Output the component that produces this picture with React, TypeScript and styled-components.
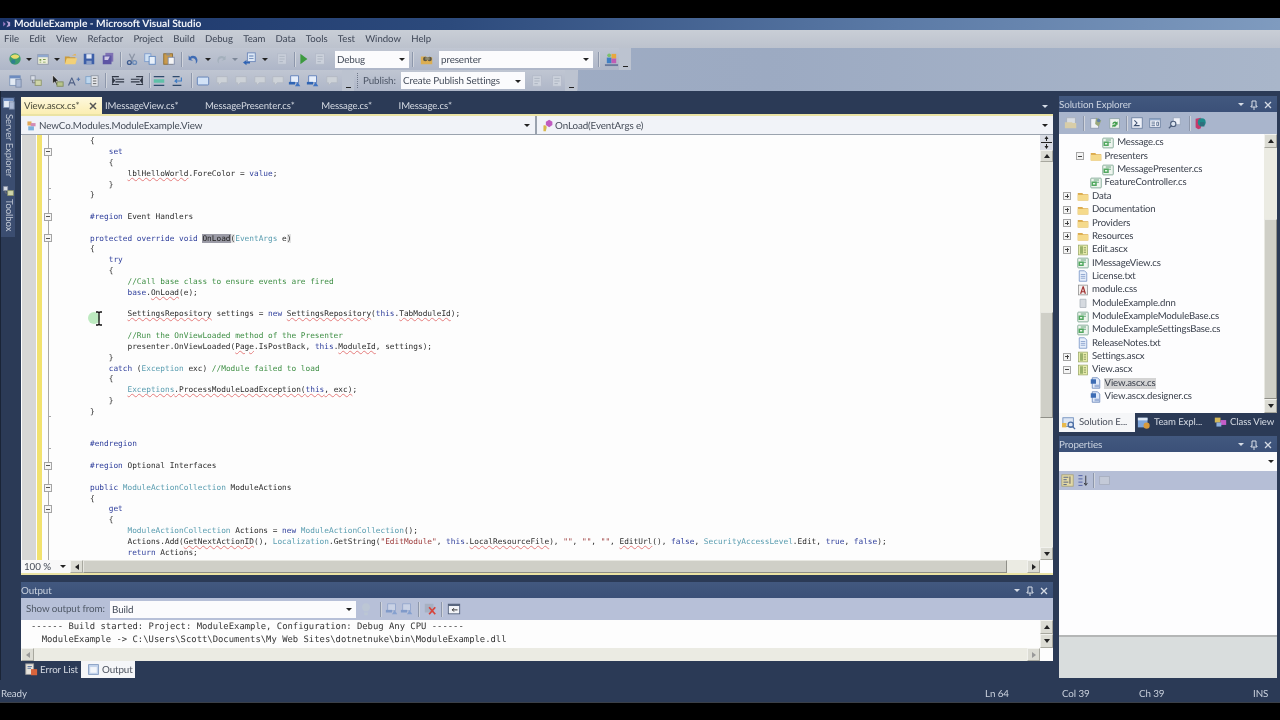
import React from "react";
import styled, { createGlobalStyle } from "styled-components";

const Global = createGlobalStyle`
  html, body { margin: 0; padding: 0; background: #000; }
  * { box-sizing: border-box; }
`;

const UI = `Lato, "Open Sans", "Noto Sans", "Liberation Sans", sans-serif`;
const MONO = `"DejaVu Sans Mono", "Liberation Mono", monospace`;
const NAVY = "#2b3a56";
const LINE = 10.84;

const Page = styled.div`
  width: 1280px; height: 720px; background: #000; overflow: hidden;
  display: flex; flex-direction: column; padding: 18px 0 17px; letter-spacing: -0.1px;
  font-family: ${UI}; text-rendering: geometricPrecision; filter: blur(0.45px);
`;
const TitleBar = styled.div`
  height: 12px; display: flex; align-items: center; gap: 2px; padding-left: 2px;
  background: linear-gradient(90deg, #1b3468 0%, #2c4a7c 35%, #5b7aa6 70%, #7f9bbf 100%);
  color: #eef1f6; font-size: 10.2px; font-weight: 700; letter-spacing: 0;
`;
const MenuBar = styled.div`
  height: 18px; display: flex; align-items: center; gap: 10.2px; padding: 1px 0 0 4px;
  background: linear-gradient(180deg, #c9ced6, #bcc2cd); color: #3e4656; font-size: 9.6px; letter-spacing: 0;
`;
const ToolRow = styled.div<{ $h: number }>`
  height: ${p => p.$h}px; background: linear-gradient(90deg, #a3b0c6, #9caac2 60%, #a9b6ca);
  display: flex; flex-shrink: 0;
`;
const Toolbar = styled.div<{ $w: number }>`
  width: ${p => p.$w}px; display: flex; align-items: center; padding-left: 6px;
  background: linear-gradient(180deg, #c0c6d2, #aeb6c8);
  border-bottom-right-radius: 2px;
`;
const Slot = styled.div<{ $w: number }>`
  width: ${p => p.$w}px; height: 100%; flex-shrink: 0;
  display: flex; align-items: center; justify-content: center;
`;
const Caret = styled.i<{ $c?: string }>`
  display: block; width: 0; height: 0;
  border-left: 3px solid transparent; border-right: 3px solid transparent;
  border-top: 3px solid ${p => p.$c || "#222"};
`;
const Sep = styled.div`width: 1px; height: 15px; background: #8d97ab; box-shadow: 1px 0 #d0d4dc;`;
const Dots = styled.div`width: 0; height: 15px; border-left: 1px dotted #6d7688;`;
const Grip = styled.div`
  width: 12px; height: 100%; display: flex; flex-direction: column; align-items: center;
  justify-content: flex-end; gap: 1px; padding-bottom: 3px; background: #bcc3d0;
  &::before { content: ""; width: 5px; height: 1px; background: #222; }
`;
const Combo = styled.div<{ $w: number; $ml?: number }>`
  width: ${p => p.$w}px; height: 17px; margin-left: ${p => p.$ml || 0}px; flex-shrink: 0;
  background: #fbfbfd; display: flex; align-items: center; justify-content: space-between;
  padding: 1px 4px 0 2px; color: #444c5a; font-size: 9.8px; white-space: nowrap;
`;
const Publish = styled.span`margin-left: 3px; width: 38px; color: #4c5566; font-size: 9.8px; padding-top: 1px;`;

const Main = styled.div`height: 589px; display: flex; background: ${NAVY};`;
const Rail = styled.div`
  width: 21px; flex-shrink: 0; padding-top: 6px;
  background: ${NAVY}; border-left: 1px solid #1a2436;
`;
const RailTabs = styled.div`width: 14px; height: 140px; background: #3b4d70; display: flex; flex-direction: column; align-items: center;`;
const RailLabel = styled.span<{ $h: number; $mt: number }>`
  writing-mode: vertical-rl; height: ${p => p.$h}px; margin-top: ${p => p.$mt}px; color: #c0c7d4; font-size: 9.6px; line-height: 14px;
`;
const Center = styled.div`width: 1032px; flex-shrink: 0; display: flex; flex-direction: column;`;
const DocTabs = styled.div`height: 23px; display: flex; align-items: flex-end; position: relative; color: #d4d9e2; font-size: 9.6px;`;
const ActiveTab = styled.div`
  width: 81px; height: 17px; background: linear-gradient(180deg, #fdf8de, #fbeeb2);
  color: #4c4c3c; display: flex; align-items: center; justify-content: space-between; padding: 1px 5px 0 3px;
`;
const TabList = styled.div`height: 17px; display: flex; gap: 26.5px; padding: 1px 0 0 3px; align-items: center;`;
const TabMenu = styled.div`position: absolute; right: 5px; top: 14px;`;
const Gold = styled.div`height: 2px; background: #ebe3a4; flex-shrink: 0;`;
const NavBar = styled.div`
  height: 19px; background: #f1f3f8; display: flex; color: #454c58; font-size: 9.8px;
  border-bottom: 1px solid #9ba3ae; flex-shrink: 0;
`;
const NavCell = styled.div<{ $w: number; $pl: number }>`
  width: ${p => p.$w}px; display: flex; align-items: center; padding: 1px 5px 0 ${p => p.$pl}px; gap: 1px;
  & > span { flex: 1; }
  border-right: 2px solid #9aa2ae;
  &:last-child { border-right: none; }
`;
const EditorWrap = styled.div`height: 425px; display: flex; background: #fdfdfd; overflow: hidden;`;
const GutterGrey = styled.div`width: 14px; margin-left: 1px; margin-right: 1px; background: #d7d7d5; flex-shrink: 0;`;
const Changed = styled.div`width: 5px; background: #f2e26e; flex-shrink: 0;`;
const FoldCol = styled.div`width: 48px; flex-shrink: 0; padding-left: 6px;`;
const FoldRail = styled.div`width: 1px; height: 100%; background: #a8a8a8;`;
const FoldMark = styled.div`height: ${LINE}px; position: relative;`;
const FoldBox = styled.div`
  position: absolute; left: -4px; top: 2px; width: 8px; height: 8px; background: #f6f6f6;
  border: 1px solid #a4a4a4; display: flex; align-items: center; justify-content: center;
  &::before { content: ""; width: 4px; height: 1px; background: #555; }
`;
const FoldTick = styled.div`position: absolute; left: 0; bottom: 0; width: 3px; height: 1px; background: #a8a8a8;`;
const Code = styled.div`
  flex: 1; min-width: 0; font-family: ${MONO}; font-size: 7.79px; color: #2c2c2c; position: relative; padding-top: 1.2px; letter-spacing: 0;
`;
const CodeLine = styled.div`height: ${LINE}px; line-height: ${LINE}px; white-space: pre;`;
const K = styled.span`color: #2f3f9c;`;
const T = styled.span`color: #5a9db0;`;
const Cm = styled.span`color: #3f8f45;`;
const S = styled.span`color: #9c3a3a;`;
const E = styled.span`text-decoration: underline wavy #e57d7d 1px; text-underline-offset: 1px;`;
const Hit = styled.span`background: #9b9ba6; color: #222;`;
const Soft = styled.span`background: #e4e4e4;`;
const CursorMark = styled.div`
  position: absolute; left: -2px; top: 177px; width: 12px; height: 12px; border-radius: 50%; background: #bdeac0;
`;
const CursorBeam = styled.svg`position: absolute; left: 5px; top: 176px;`;

const VBar = styled.div`width: 13px; flex-shrink: 0; display: flex; flex-direction: column; background: #ebebe3;`;
const SplitBtn = styled.div`height: 15px; background: #d9dce4; display: flex; align-items: center; justify-content: center;`;
const Arrow = styled.div<{ $h?: number }>`
  height: ${p => p.$h || 13}px; flex-shrink: 0; background: #dcdcd4; display: flex; align-items: center; justify-content: center;
  border: 1px solid; border-color: #f2f2ee #a8a89f #a8a89f #f2f2ee;
`;
const Tri = styled.i<{ $d: "u" | "d" | "l" | "r"; $c?: string }>`
  display: block; width: 0; height: 0;
  ${p => {
    const c = p.$c || "#222";
    if (p.$d === "u") return `border-left:3.5px solid transparent;border-right:3.5px solid transparent;border-bottom:4px solid ${c};`;
    if (p.$d === "d") return `border-left:3.5px solid transparent;border-right:3.5px solid transparent;border-top:4px solid ${c};`;
    if (p.$d === "l") return `border-top:3.5px solid transparent;border-bottom:3.5px solid transparent;border-right:4px solid ${c};`;
    return `border-top:3.5px solid transparent;border-bottom:3.5px solid transparent;border-left:4px solid ${c};`;
  }}
`;
const VTrack = styled.div<{ $h: number }>`height: ${p => p.$h}px; flex-shrink: 0;`;
const VThumb = styled.div<{ $h: number }>`
  height: ${p => p.$h}px; flex-shrink: 0; background: #cfcfc7; border: 1px solid; border-color: #e8e8e2 #8f8f88 #8f8f88 #e8e8e2;
`;
const HBar = styled.div`height: 13px; display: flex; flex-shrink: 0; background: #ebebe3;`;
const Zoom = styled.div`
  width: 49px; background: #f8f8f8; display: flex; align-items: center; justify-content: space-between;
  padding: 0 4px 0 3px; color: #454c58; font-size: 9.8px;
`;
const HBtn = styled.div`
  width: 13px; flex-shrink: 0; background: #dcdcd4; display: flex; align-items: center; justify-content: center;
  border: 1px solid; border-color: #f2f2ee #a8a89f #a8a89f #f2f2ee;
`;
const HThumb = styled.div<{ $w: number }>`
  width: ${p => p.$w}px; flex-shrink: 0; background: #cfcfc7; border: 1px solid; border-color: #e8e8e2 #8f8f88 #8f8f88 #e8e8e2;
`;
const Corner = styled.div`width: 13px; flex-shrink: 0; background: #fdfdfd;`;
const Spacer = styled.div`flex: 1;`;

const PanelTitle = styled.div<{ $mt?: number }>`
  height: 16px; flex-shrink: 0; margin-top: ${p => p.$mt || 0}px;
  background: linear-gradient(180deg, #42587f, #3b5078); color: #cbd3e0; font-size: 9.8px;
  display: flex; align-items: center; padding: 1px 5px 0 0;
  & > span:first-child { flex: 1; }
`;
const PanelBtns = styled.div`display: flex; align-items: center; gap: 6px; color: #d6dce6;`;
const OutBar = styled.div`
  height: 22px; background: #b7c0d8; display: flex; align-items: center; flex-shrink: 0;
`;
const OutLabel = styled.span`margin-left: 5px; width: 84px; color: #4f5866; font-size: 9.8px; white-space: nowrap;`;
const OutBody = styled.div`height: 28px; display: flex; background: #fdfdfd;`;
const OutText = styled.div`
  flex: 1; font-family: ${MONO}; font-size: 8.9px; line-height: 13px; color: #333; white-space: pre; padding: 1px 0 0 10px; letter-spacing: 0;
`;
const OutTabs = styled.div`height: 17px; display: flex; align-items: stretch; color: #d4d9e2; font-size: 9.8px;`;
const OutTab = styled.div<{ $active?: boolean; $w: number; $pl: number }>`
  width: ${p => p.$w}px; padding-left: ${p => p.$pl}px; display: flex; align-items: center; gap: 2px;
  ${p => p.$active && "background:#f5f6f8;color:#4a505c;"}
`;

const Dock = styled.div`width: 218px; margin-left: 6px; flex-shrink: 0; display: flex; flex-direction: column; padding-top: 5px;`;
const DockBar = styled.div<{ $h: number; $bg: string }>`
  height: ${p => p.$h}px; background: ${p => p.$bg}; flex-shrink: 0; display: flex; align-items: center;
`;
const TreeWrap = styled.div`height: 279px; display: flex; background: #fdfdfe; flex-shrink: 0; overflow: hidden;`;
const Tree = styled.div`flex: 1; padding-top: 2.2px; color: #3c424e; font-size: 9.6px; letter-spacing: -0.15px;`;
const Row = styled.div<{ $d: number }>`
  height: 13.36px; display: flex; align-items: center; padding-left: ${p => (p.$d - 1) * 12.6 + 18}px; position: relative; white-space: nowrap;
`;
const Expander = styled.div<{ $plus: boolean }>`
  position: absolute; margin-left: -14px; width: 8px; height: 8px; border: 1px solid #a6a6a6; background: #f4f4f4;
  display: flex; align-items: center; justify-content: center;
  &::before { content: ""; position: absolute; width: 4px; height: 1px; background: #444; }
  ${p => p.$plus && `&::after { content: ""; position: absolute; width: 1px; height: 4px; background: #444; }`}
`;
const RowText = styled.span<{ $sel?: boolean }>`
  margin-left: 2px; padding: 0 1px; ${p => p.$sel && "background:#d4d4d4;"}
`;
const SideTabs = styled.div`height: 19px; display: flex; align-items: stretch; flex-shrink: 0; color: #d4d9e2; font-size: 9.6px;`;
const SideTab = styled.div<{ $active?: boolean; $w: number; $pl: number }>`
  width: ${p => p.$w}px; padding-left: ${p => p.$pl}px; display: flex; align-items: center; gap: 3px; white-space: nowrap;
  ${p => p.$active && "background:#f5f6f8;color:#4a505c;"}
`;
const PropCombo = styled.div`height: 19px; background: #fbfbfc; display: flex; align-items: center; justify-content: flex-end; padding-right: 3px; flex-shrink: 0;`;
const PropBody = styled.div`height: 147px; background: #fdfdfe; border-bottom: 2px solid #b4b6b6; flex-shrink: 0;`;
const PropDesc = styled.div`height: 41px; background: #d9dddd; flex-shrink: 0;`;

const Status = styled.div`
  height: 23px; background: ${NAVY}; color: #c9d0dc; font-size: 9.8px;
  display: flex; align-items: center; padding-top: 5px; padding-left: 1px;
  border-bottom: 1px solid #3a3f48;
`;
const StatusItem = styled.span<{ $w: number }>`width: ${p => p.$w}px; flex-shrink: 0;`;

const I = {
  vs: <><path d="M2 4l4 4-4 4z" fill="#9a7cc4"/><path d="M7 3l6 2v6l-6 2 3-5z" fill="#b9a5d8"/></>,
  globe: <><circle cx="8" cy="8" r="6.5" fill="#3f9c6e"/><path d="M3 5c3-3 8-3 10 0-2 3-7 4-10 0z" fill="#e8dc6c"/><circle cx="6" cy="11" r="2.5" fill="#2e7f8f"/></>,
  add: <><rect x="2" y="3" width="12" height="11" fill="#eef0da" stroke="#8d94a6"/><rect x="2" y="3" width="12" height="3" fill="#8fa7cf"/><path d="M4 8h2v2H4zM8 8h3v1H8zM4 11h2v1H4zM8 11h3v1H8z" fill="#7d9a52"/></>,
  folder: <><path d="M1 5h5l1 1h6v7H1z" fill="#c99a3c"/><path d="M3 7h12l-2 7H1z" fill="#f2d078"/><path d="M9 4l4-2 1 2z" fill="#eab14a"/></>,
  save: <><rect x="2" y="2" width="12" height="12" fill="#3d5fa8"/><rect x="5" y="2.5" width="6" height="5" fill="#dfe6f4"/><rect x="5" y="10" width="6" height="4" fill="#8ca0c8"/></>,
  saveall: <><rect x="5" y="1" width="9" height="10" fill="#7f72b4"/><rect x="2" y="4" width="10" height="10" fill="#5d55a4"/><path d="M4 5h6l-2 4H4z" fill="#cfc9e6"/></>,
  cut: <><path d="M5 2l4 8M11 2l-4 8" stroke="#8c95a6" strokeWidth="1.5"/><circle cx="5" cy="12" r="2.2" fill="none" stroke="#3d5b8f" strokeWidth="1.5"/><circle cx="11" cy="12" r="2.2" fill="none" stroke="#6a8ab8" strokeWidth="1.5"/></>,
  copy: <><rect x="2" y="2" width="7" height="9" fill="#cfe0f2" stroke="#7d9ccc"/><rect x="7" y="5" width="7" height="9" fill="#e8f0fa" stroke="#5d86c0"/></>,
  paste: <><rect x="2" y="2" width="10" height="12" fill="#c99a4c" stroke="#8a6a30"/><rect x="5" y="1" width="4" height="3" fill="#8d8d8d"/><rect x="7" y="6" width="7" height="8" fill="#f4f4f4" stroke="#7d8aa8"/></>,
  undo: <path d="M3 9V4l1.6 1.6C7 3.4 12 4 13 8.5c.5 2.500-1 4.500-2 5 .8-2.500.5-6-3-6.500-1 0-2 .4-2.400 1L8 10z" fill="#3f6cb4"/>,
  redo: <path d="M13 9V4l-1.600 1.600C9 3.400 4 4 3 8.500c-.5 2.500 1 4.500 2 5-.8-2.500-.5-6 3-6.500 1 0 2 .4 2.400 1L8 10z" fill="#a4b0bc"/>,
  nav: <><rect x="5" y="1" width="9" height="10" fill="#dde8f6" stroke="#6b86b8"/><path d="M7 4h5v1H7zM7 7h5v1H7z" fill="#5d7bb0"/><path d="M8 11H4V9l-4 3 4 3v-2h4z" fill="#2f64b4"/></>,
  ghost: <><rect x="3" y="2" width="10" height="12" fill="#ccd2dc" stroke="#b3bac8"/><path d="M5 5h6M5 8h6M5 11h4" stroke="#a8b0be"/></>,
  play: <path d="M5 2l8 6-8 6z" fill="#3d9a40"/>,
  find: <><path d="M1 5h6l1 1h6v8H1z" fill="#dcae52"/><circle cx="6" cy="8" r="2.500" fill="#5d5642"/><circle cx="11" cy="8" r="2.500" fill="#5d5642"/><rect x="6" y="6" width="5" height="3" fill="#8f8a70"/></>,
  color: <><rect x="1" y="13" width="14" height="2" fill="#6b7a9c"/><rect x="3" y="6" width="5" height="6" fill="#3f7fc4"/><rect x="8" y="2" width="5" height="5" fill="#e8a83c"/><rect x="8" y="7" width="5" height="5" fill="#c05cb4"/><circle cx="5.500" cy="3.500" r="2" fill="#7cc06c"/></>,
  win: <><rect x="2" y="2" width="12" height="11" fill="#e3eaf4" stroke="#7d94b8"/><rect x="2" y="2" width="12" height="3" fill="#6d8cc0"/><rect x="9" y="6" width="6" height="9" fill="#aab8d4" stroke="#7a8aa8"/></>,
  tree: <><rect x="2" y="2" width="5" height="5" fill="#d8dde6" stroke="#8d95a6"/><rect x="7" y="7" width="7" height="6" fill="#cfd5a8" stroke="#8d956a"/><path d="M4 7v3h3" stroke="#777" fill="none"/></>,
  pointer: <><path d="M3 1v10l2.500-2 2 4 1.500-.7-2-4h3z" fill="#222" stroke="#fff" strokeWidth=".6"/><rect x="8" y="9" width="7" height="5" fill="#b7c48c" stroke="#7e8a5c"/></>,
  font: <><path d="M1 13L5 4h1l4 9H8.500l-.9-2.200H3.400L2.500 13zM3.900 9.500h3.200L5.500 5.600z" fill="#4e5f84"/><path d="M11 6h4M13 4v4" stroke="#4e6fa8" strokeWidth="1.200"/></>,
  props: <><rect x="1" y="3" width="8" height="8" fill="#bcd6ee" stroke="#7ea2c8"/><rect x="7" y="2" width="8" height="12" fill="#e6e8ec" stroke="#8d95a3"/><path d="M9 5h4M9 8h4M9 11h4" stroke="#555"/></>,
  ind: <path d="M1 3h8M5 6h10M5 9h10M1 12h8M2 5l2 2.500-2 2.500z" stroke="#2f3644" strokeWidth="1.400" fill="#333"/>,
  out: <path d="M7 3h8M1 6h10M1 9h10M7 12h8M14 5l-2 2.500 2 2.500z" stroke="#2f3644" strokeWidth="1.400" fill="#333"/>,
  lines: <><path d="M2 3h12M2 13h12" stroke="#2f4a6c" strokeWidth="1.300"/><rect x="2" y="6" width="12" height="4" fill="#5fc0a8"/></>,
  wrap: <><path d="M3 3h8M3 13h10" stroke="#2f4a6c" strokeWidth="1.300"/><path d="M13 4v4H6l2-2M6 8l2 2" stroke="#3f7cc4" fill="none" strokeWidth="1.300"/></>,
  box: <rect x="1.500" y="3.500" width="13" height="9" rx="1" fill="#d2e2f6" stroke="#5a7cb4"/>,
  bubble: <path d="M2 3h12v7H7l-3 3v-3H2z" fill="#cdd2d8" stroke="#b3b9c3"/>,
  bm: <><path d="M3 2h9v8H3z" fill="#e6eefa" stroke="#5a7cb8"/><path d="M1 9h7v3H1z" fill="#2f64b4"/><path d="M8 14h6l-3-5z" fill="#3f74c4"/></>,
  cs: <><rect x="1" y="1.500" width="14" height="13" rx="1" fill="#eef4ee" stroke="#6a9a80"/><path d="M5 4h7M5 7h7" stroke="#3f8f5c"/><path d="M2 6h7v6H2z" fill="#52a860"/><path d="M4 8h3v2H4z" fill="#e9f4e9"/></>,
  fold: <><path d="M1 4h6l1.500 1.500H15V14H1z" fill="#dcab4e"/><path d="M1 6.500h14V14H1z" fill="#f5da8c"/></>,
  doc: <><path d="M3 1h7l3 3v11H3z" fill="#e6eefb" stroke="#6d8cc0"/><path d="M5 6h6M5 8.500h6M5 11h6" stroke="#7a94c4"/></>,
  ascx: <><rect x="2" y="1.500" width="12" height="13" fill="#e6ecaa" stroke="#9aa868"/><rect x="4" y="3" width="4" height="10" fill="#9ab26c"/><path d="M9 5h3M9 8h3M9 11h3" stroke="#6c7c4a"/></>,
  css: <><rect x="2" y="1.500" width="12" height="13" fill="#f4f2f0" stroke="#8d8d8d"/><path d="M4 13L7.500 3h1.500L12 13h-1.800l-.6-2H6.400l-.6 2zM6.900 9.500h2.200L8 5.800z" fill="#a03232"/></>,
  dnn: <path d="M4 3h8v11H4z" fill="#d6dae0" stroke="#a9b0ba"/>,
  code: <><path d="M3 1h7l3 3v11H3z" fill="#e2ebfa" stroke="#5c7cb4"/><path d="M1 3h7v6H1z" fill="#3d6cb4"/><path d="M6 11h6M6 13h6" stroke="#6b8ac0"/></>,
  solution: <><rect x="1" y="2" width="12" height="10" fill="#dde6f4" stroke="#6f8fbd"/><rect x="0" y="8" width="5" height="5" fill="#e8b94c"/><circle cx="10" cy="10" r="3" fill="none" stroke="#4c6ea4" strokeWidth="1.500"/><path d="M12 12l3 3" stroke="#4c6ea4" strokeWidth="1.500"/></>,
  team: <><rect x="1" y="2" width="11" height="11" fill="#7ea6dc"/><rect x="1" y="2" width="11" height="3" fill="#dfe8f4"/><circle cx="11" cy="11" r="3.500" fill="#d89a3c"/></>,
  cls: <><rect x="1" y="2" width="7" height="6" fill="#d4b85a"/><rect x="8" y="5" width="7" height="6" fill="#c45cc8"/><rect x="3" y="8" width="6" height="5" fill="#8fb0e0"/></>,
  err: <><rect x="2" y="1" width="9" height="12" fill="#e8e4dc" stroke="#9a9a9a"/><path d="M8 7h7v7H8z" fill="#d9643c"/><path d="M4 4h5M4 6h4" stroke="#4f6b9a"/></>,
  output: <><rect x="2" y="2" width="12" height="12" fill="#c4d4ec" stroke="#7a94bc"/><rect x="4" y="5" width="8" height="7" fill="#f2f5fa"/></>,
  bulb: <path d="M8 1.500c3 0 4.500 2 4.500 4.500 0 2-1.500 3-2 4.500h-5C5 9 3.500 8 3.500 6c0-2.500 1.500-4.500 4.500-4.500zM6 12h4v3H6z" fill="#bcc6d4"/>,
  del: <><rect x="2" y="2" width="10" height="10" fill="#a7b0c2"/><path d="M7 6l7 8M14 6l-7 8" stroke="#d8443c" strokeWidth="2"/></>,
  outw: <><rect x="1.500" y="2.500" width="13" height="11" fill="#f2f4f8" stroke="#4f5d78"/><rect x="1.500" y="2.500" width="13" height="2" fill="#4f5d78"/><path d="M6 9h6M6 9l2-2M6 9l2 2" stroke="#222"/></>,
  sort: <><rect x="1" y="1" width="14" height="14" fill="#e2d9a6" stroke="#a7a078"/><path d="M3 4h6M3 7h4M3 10h6M3 13h4" stroke="#3f4f7c"/><path d="M11 3v9" stroke="#445"/></>,
  az: <><path d="M3 2h5M3 6h5M3 10h5M3 14h5" stroke="#3f4f9c"/><path d="M12 2v11M10 11l2 3 2-3" stroke="#222" fill="none"/></>,
  page: <rect x="2" y="3" width="12" height="10" fill="#c4cad8" stroke="#a6adbd"/>,
  ns: <><path d="M3 3h5v5H3z" fill="#e0a858"/><path d="M7 5h6v4H7z" fill="#d48cb4"/><path d="M4 9h7v5H4z" fill="#7cb0dc"/></>,
  method: <><path d="M3 8c2-1 4 0 4 2s-1 3-1 5H3z" fill="#d8b84c"/><path d="M10 1l4 2.500v4L10 10 6 7.500v-4z" fill="#c05cc0"/></>,
  dkFolder: <><rect x="3" y="2" width="10" height="11" fill="#d8dde4" stroke="#aab1bd"/><path d="M1 7h8l1 1h4v6H1z" fill="#d8cda8"/></>,
  dkProps: <><rect x="2" y="3" width="9" height="11" fill="#eef1f6" stroke="#8e9ab0"/><path d="M8 2l6 3-3 7-4-3z" fill="#9aa87c"/><circle cx="11" cy="5" r="2" fill="#5f7fa8"/></>,
  dkRefresh: <><rect x="2" y="3" width="11" height="11" fill="#eef3ee" stroke="#8fa2a8"/><path d="M5 9a3 3 0 0 1 5-2l1-1v4H7l1.500-1.400A1.500 1.500 0 0 0 6 9.500z" fill="#3f9c4a"/><path d="M10 10a3 3 0 0 1-4 2l-1 1v-3h3z" fill="#3f9c4a"/></>,
  dkCode: <><rect x="2" y="2" width="12" height="12" fill="#eef1f8" stroke="#6b7f9f"/><path d="M5 5l3 3-3 3h6" fill="none" stroke="#3d5070" strokeWidth="1.200"/></>,
  dkView: <><rect x="2" y="3" width="12" height="10" fill="#eef1f8" stroke="#6b7f9f"/><rect x="2" y="3" width="12" height="2" fill="#8fa7c8"/><path d="M4 7h4M4 9h4M4 11h4M10 7h2v4h-2z" stroke="#5d7090" fill="none"/></>,
  dkFind: <><rect x="6" y="2" width="8" height="8" fill="#eef1f8" stroke="#9aa7bd"/><circle cx="6" cy="9" r="3" fill="#dbe4f0" stroke="#4e5f7c" strokeWidth="1.300"/><path d="M4 11l-3 3" stroke="#4e5f7c" strokeWidth="1.500"/></>,
  dkClass: <><path d="M3 3l6-1v12l-3 1-3-2z" fill="#c43a6c"/><circle cx="10" cy="7" r="4.500" fill="#1f8a8a"/><path d="M8 7h5v5H8z" fill="#2f6f7c"/></>,
};
type IconName = keyof typeof I;

const Ico = ({ n, s = 14, o = 1 }: { n: IconName; s?: number; o?: number }) => (
  <svg width={s} height={s} viewBox="0 0 16 16" style={o === 1 ? undefined : { opacity: o }}>{I[n]}</svg>
);

const PanelControls = () => (
  <PanelBtns>
    <Caret $c="#d6dce6" />
    <svg width="8" height="10" viewBox="0 0 8 10"><path d="M2 1h4v5h1v1H1V6h1zM4 7v3" fill="none" stroke="#d6dce6" /></svg>
    <svg width="8" height="8" viewBox="0 0 8 8"><path d="M1 1l6 6M7 1L1 7" stroke="#d6dce6" strokeWidth="1.300" /></svg>
  </PanelBtns>
);

const tool1: [number, React.ReactNode][] = [
  [18, <Ico n="globe" />], [10, <Caret />], [18, <Ico n="add" />], [10, <Caret />], [18, <Ico n="folder" />],
  [18, <Ico n="save" />], [19, <Ico n="saveall" />], [6, <Sep />], [18, <Ico n="cut" />], [18, <Ico n="copy" />],
  [19, <Ico n="paste" />], [6, <Sep />], [17, <Ico n="undo" />], [14, <Caret />], [13, <Ico n="redo" />],
  [14, <Caret $c="#7d8798" />], [16, <Ico n="nav" />], [14, <Caret />], [20, <Ico n="ghost" o={0.8} />], [4, <Sep />],
  [14, <Ico n="play" />], [20, <Ico n="ghost" />],
];
const tool2: [number, React.ReactNode][] = [
  [18, <Ico n="win" />], [24, <Ico n="tree" />], [18, <Ico n="pointer" />], [16, <Ico n="font" />], [20, <Ico n="props" />],
  [6, <Sep />], [20, <Ico n="ind" />], [18, <Ico n="out" />], [6, <Sep />], [14, <Ico n="lines" />], [22, <Ico n="wrap" />],
  [6, <Sep />], [18, <Ico n="box" />], [20, <Ico n="bubble" />], [18, <Ico n="bubble" />], [20, <Ico n="bubble" />],
  [16, <Ico n="bubble" />], [18, <Ico n="bm" />], [18, <Ico n="bm" />], [20, <Ico n="bubble" />],
];
const dockTools: [number, React.ReactNode][] = [
  [3, null], [18, <Ico n="dkFolder" />], [6, <Sep />], [20, <Ico n="dkProps" />], [17, <Ico n="dkRefresh" />], [6, <Sep />],
  [16, <Ico n="dkCode" />], [20, <Ico n="dkView" />], [20, <Ico n="dkFind" />], [8, <Sep />], [14, <Ico n="dkClass" />],
];

type TreeItem = { d: number; ic: IconName; t: string; x?: "+" | "-"; sel?: boolean };
const tree: TreeItem[] = [
  { d: 3, ic: "cs", t: "Message.cs" },
  { d: 2, ic: "fold", t: "Presenters", x: "-" },
  { d: 3, ic: "cs", t: "MessagePresenter.cs" },
  { d: 2, ic: "cs", t: "FeatureController.cs" },
  { d: 1, ic: "fold", t: "Data", x: "+" },
  { d: 1, ic: "fold", t: "Documentation", x: "+" },
  { d: 1, ic: "fold", t: "Providers", x: "+" },
  { d: 1, ic: "fold", t: "Resources", x: "+" },
  { d: 1, ic: "ascx", t: "Edit.ascx", x: "+" },
  { d: 1, ic: "cs", t: "IMessageView.cs" },
  { d: 1, ic: "doc", t: "License.txt" },
  { d: 1, ic: "css", t: "module.css" },
  { d: 1, ic: "dnn", t: "ModuleExample.dnn" },
  { d: 1, ic: "cs", t: "ModuleExampleModuleBase.cs" },
  { d: 1, ic: "cs", t: "ModuleExampleSettingsBase.cs" },
  { d: 1, ic: "doc", t: "ReleaseNotes.txt" },
  { d: 1, ic: "ascx", t: "Settings.ascx", x: "+" },
  { d: 1, ic: "ascx", t: "View.ascx", x: "-" },
  { d: 2, ic: "code", t: "View.ascx.cs", sel: true },
  { d: 2, ic: "code", t: "View.ascx.designer.cs" },
];

const sp = (n: number) => " ".repeat(n);
const code: React.ReactNode[] = [
  "{",
  <>{sp(4)}<K>set</K></>,
  <>{sp(4)}{"{"}</>,
  <>{sp(8)}<E>lblHelloWorld</E>.ForeColor = <K>value</K>;</>,
  <>{sp(4)}{"}"}</>,
  "}",
  "",
  <><K>#region</K> Event Handlers</>,
  "",
  <><K>protected override void</K> <Hit>OnLoad</Hit><Soft>(</Soft><T>EventArgs</T> e<Soft>)</Soft></>,
  "{",
  <>{sp(4)}<K>try</K></>,
  <>{sp(4)}{"{"}</>,
  <>{sp(8)}<Cm>//Call base class to ensure events are fired</Cm></>,
  <>{sp(8)}<K>base</K>.<E>OnLoad</E>(e);</>,
  "",
  <>{sp(8)}<E>SettingsRepository</E> settings = <K>new</K> <E>SettingsRepository</E>(<K>this</K>.<E>TabModuleId</E>);</>,
  "",
  <>{sp(8)}<Cm>//Run the OnViewLoaded method of the Presenter</Cm></>,
  <>{sp(8)}presenter.OnViewLoaded(<E>Page</E>.IsPostBack, <K>this</K>.<E>ModuleId</E>, settings);</>,
  <>{sp(4)}{"}"}</>,
  <>{sp(4)}<K>catch</K> (<T>Exception</T> exc) <Cm>//Module failed to load</Cm></>,
  <>{sp(4)}{"{"}</>,
  <>{sp(8)}<E><T>Exceptions</T>.ProcessModuleLoadException(<K>this</K>, exc)</E>;</>,
  <>{sp(4)}{"}"}</>,
  "}",
  "",
  "",
  <><K>#endregion</K></>,
  "",
  <><K>#region</K> Optional Interfaces</>,
  "",
  <><K>public</K> <T>ModuleActionCollection</T> ModuleActions</>,
  "{",
  <>{sp(4)}<K>get</K></>,
  <>{sp(4)}{"{"}</>,
  <>{sp(8)}<T>ModuleActionCollection</T> Actions = <K>new</K> <T>ModuleActionCollection</T>();</>,
  <>{sp(8)}Actions.Add(<E>GetNextActionID</E>(), <T>Localization</T>.GetString(<S>"EditModule"</S>, <K>this</K>.<E>LocalResourceFile</E>), <S>""</S>, <S>""</S>, <S>""</S>, <E>EditUrl</E>(), <K>false</K>, <T>SecurityAccessLevel</T>.Edit, <K>true</K>, <K>false</K>);</>,
  <>{sp(8)}<K>return</K> Actions;</>,
];
const boxes = [1, 7, 9, 30, 32, 34];
const ticks = [4, 5, 25, 28];

export default function App() {
  return (
    <Page>
      <Global />
      <TitleBar><Ico n="vs" s={10} />ModuleExample - Microsoft Visual Studio</TitleBar>
      <MenuBar>
        {["File", "Edit", "View", "Refactor", "Project", "Build", "Debug", "Team", "Data", "Tools", "Test", "Window", "Help"].map(m => <span key={m}>{m}</span>)}
      </MenuBar>
      <ToolRow $h={22}>
        <Toolbar $w={631}>
          {tool1.map(([w, c], i) => <Slot key={i} $w={w}>{c}</Slot>)}
          <Combo $w={74} $ml={5}>Debug<Caret /></Combo>
          <Slot $w={6}><Sep /></Slot>
          <Slot $w={24}><Ico n="find" /></Slot>
          <Combo $w={154}>presenter<Caret /></Combo>
          <Slot $w={10}><Sep /></Slot>
          <Slot $w={16}><Ico n="color" s={15} /></Slot>
          <Grip />
        </Toolbar>
      </ToolRow>
      <ToolRow $h={21}>
        <Toolbar $w={578}>
          {tool2.map(([w, c], i) => <Slot key={i} $w={w}>{c}</Slot>)}
          <Grip />
          <Slot $w={6}><Dots /></Slot>
          <Publish>Publish:</Publish>
          <Combo $w={124}>Create Publish Settings<Caret /></Combo>
          <Slot $w={23}><Ico n="ghost" /></Slot>
          <Slot $w={17}><Ico n="ghost" /></Slot>
          <Grip />
        </Toolbar>
      </ToolRow>
      <Main>
        <Rail>
          <RailTabs>
            <Ico n="win" s={13} />
            <RailLabel $h={72} $mt={4}>Server Explorer</RailLabel>
            <Ico n="tree" s={13} />
            <RailLabel $h={38} $mt={1}>Toolbox</RailLabel>
          </RailTabs>
        </Rail>
        <Center>
          <DocTabs>
            <ActiveTab>View.ascx.cs*
              <svg width="8" height="8" viewBox="0 0 8 8"><path d="M1 1l6 6M7 1L1 7" stroke="#555" strokeWidth="1.500" /></svg>
            </ActiveTab>
            <TabList>
              {["IMessageView.cs*", "MessagePresenter.cs*", "Message.cs*", "IMessage.cs*"].map(t => <span key={t}>{t}</span>)}
            </TabList>
            <TabMenu><Caret $c="#d6dce6" /></TabMenu>
          </DocTabs>
          <Gold />
          <NavBar>
            <NavCell $w={516} $pl={4}><Ico n="ns" s={13} /><span>NewCo.Modules.ModuleExample.View</span><Caret /></NavCell>
            <NavCell $w={516} $pl={4}><Ico n="method" s={13} /><span>OnLoad(EventArgs e)</span><Caret /></NavCell>
          </NavBar>
          <EditorWrap>
            <GutterGrey />
            <Changed />
            <FoldCol>
              <FoldRail>
                {code.map((_, i) => (
                  <FoldMark key={i}>
                    {boxes.includes(i) && <FoldBox />}
                    {ticks.includes(i) && <FoldTick />}
                  </FoldMark>
                ))}
              </FoldRail>
            </FoldCol>
            <Code>
              {code.map((c, i) => <CodeLine key={i}>{c}</CodeLine>)}
              <CursorMark />
              <CursorBeam width="8" height="15" viewBox="0 0 8 15"><path d="M1 1h2l1 1 1-1h2M4 2v11M1 14h2l1-1 1 1h2" fill="none" stroke="#111" strokeWidth="1.300" /></CursorBeam>
            </Code>
            <VBar>
              <SplitBtn>
                <svg width="11" height="13" viewBox="0 0 11 13"><path d="M5.500 0l2 3h-4zM5.500 13l2-3h-4zM0 6h11v1H0zM5 3h1v2H5zM5 8h1v2H5z" fill="#222" /></svg>
              </SplitBtn>
              <Arrow $h={12}><Tri $d="u" /></Arrow>
              <VTrack $h={150} />
              <VThumb $h={106} />
              <VTrack $h={129} />
              <Arrow><Tri $d="d" /></Arrow>
            </VBar>
          </EditorWrap>
          <HBar>
            <Zoom>100 %<Caret /></Zoom>
            <HBtn><Tri $d="l" /></HBtn>
            <HThumb $w={924} />
            <Spacer />
            <HBtn><Tri $d="r" /></HBtn>
            <Corner />
          </HBar>
          <Gold />
          <PanelTitle $mt={7}>
            <span>Output</span>
            <PanelControls />
          </PanelTitle>
          <OutBar>
            <OutLabel>Show output from:</OutLabel>
            <Combo $w={246}>Build<Caret /></Combo>
            <Slot $w={20}><Ico n="bulb" /></Slot>
            <Slot $w={8}><Sep /></Slot>
            <Slot $w={15}><Ico n="bm" o={0.4} /></Slot>
            <Slot $w={15}><Ico n="bm" o={0.4} /></Slot>
            <Slot $w={8}><Sep /></Slot>
            <Slot $w={16}><Ico n="del" /></Slot>
            <Slot $w={6}><Sep /></Slot>
            <Slot $w={20}><Ico n="outw" /></Slot>
          </OutBar>
          <OutBody>
            <OutText>{`------ Build started: Project: ModuleExample, Configuration: Debug Any CPU ------\n  ModuleExample -> C:\\Users\\Scott\\Documents\\My Web Sites\\dotnetnuke\\bin\\ModuleExample.dll`}</OutText>
            <VBar>
              <Arrow $h={14}><Tri $d="u" /></Arrow>
              <Arrow $h={14}><Tri $d="d" /></Arrow>
            </VBar>
          </OutBody>
          <HBar>
            <HBtn><Tri $d="l" $c="#999" /></HBtn>
            <Spacer />
            <HBtn><Tri $d="r" $c="#999" /></HBtn>
            <Corner />
          </HBar>
          <OutTabs>
            <OutTab $w={60} $pl={3}><Ico n="err" s={14} />Error List</OutTab>
            <OutTab $active $w={54} $pl={6}><Ico n="output" s={13} />Output</OutTab>
          </OutTabs>
        </Center>
        <Dock>
          <PanelTitle>
            <span>Solution Explorer</span>
            <PanelControls />
          </PanelTitle>
          <DockBar $h={22} $bg="#a9b5cc">
            {dockTools.map(([w, c], i) => <Slot key={i} $w={w}>{c}</Slot>)}
          </DockBar>
          <TreeWrap>
            <Tree>
              {tree.map(r => (
                <Row key={r.t} $d={r.d}>
                  {r.x && <Expander $plus={r.x === "+"} />}
                  <Ico n={r.ic} s={12} />
                  <RowText $sel={r.sel}>{r.t}</RowText>
                </Row>
              ))}
            </Tree>
            <VBar>
              <Arrow $h={14}><Tri $d="u" /></Arrow>
              <VTrack $h={71} />
              <VThumb $h={180} />
              <Arrow $h={14}><Tri $d="d" /></Arrow>
            </VBar>
          </TreeWrap>
          <SideTabs>
            <SideTab $active $w={76} $pl={3}><Ico n="solution" s={14} />Solution E...</SideTab>
            <SideTab $w={76} $pl={2}><Ico n="team" s={14} />Team Expl...</SideTab>
            <SideTab $w={66} $pl={3}><Ico n="cls" s={13} />Class View</SideTab>
          </SideTabs>
          <PanelTitle $mt={4}>
            <span>Properties</span>
            <PanelControls />
          </PanelTitle>
          <PropCombo><Caret /></PropCombo>
          <DockBar $h={19} $bg="#b5bed6">
            <Slot $w={1} />
            <Slot $w={15}><Ico n="sort" s={13} /></Slot>
            <Slot $w={15}><Ico n="az" s={13} /></Slot>
            <Slot $w={6}><Sep /></Slot>
            <Slot $w={16}><Ico n="page" s={13} /></Slot>
          </DockBar>
          <PropBody />
          <PropDesc />
        </Dock>
      </Main>
      <Status>
        <StatusItem $w={984}>Ready</StatusItem>
        <StatusItem $w={77}>Ln 64</StatusItem>
        <StatusItem $w={77}>Col 39</StatusItem>
        <StatusItem $w={114}>Ch 39</StatusItem>
        <span>INS</span>
      </Status>
    </Page>
  );
}
